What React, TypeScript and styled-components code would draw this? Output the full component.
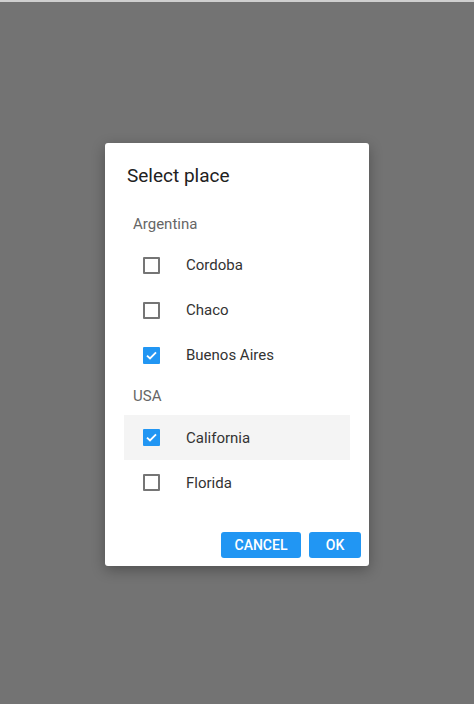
import React, {useState} from 'react';
import styled, {createGlobalStyle} from 'styled-components';

const GlobalStyle = createGlobalStyle`
  html, body {
    margin: 0;
    padding: 0;
  }
  body {
    font-family: Roboto, "Liberation Sans", sans-serif;
  }
`;

type Place = {
  name: string;
  checked: boolean;
};

type Group = {
  country: string;
  places: Place[];
};

const INITIAL: Group[] = [
  {
    country: 'Argentina',
    places: [
      {name: 'Cordoba', checked: false},
      {name: 'Chaco', checked: false},
      {name: 'Buenos Aires', checked: true},
    ],
  },
  {
    country: 'USA',
    places: [
      {name: 'California', checked: true},
      {name: 'Florida', checked: false},
    ],
  },
];

const Screen = styled.div`
  width: 474px;
  height: 704px;
  box-sizing: border-box;
  background: #737373;
  border-top: 2px solid #cfcfcf;
  display: flex;
  justify-content: center;
  padding-top: 141px;
`;

const Dialog = styled.div`
  width: 264px;
  height: 423px;
  box-sizing: border-box;
  background: #fff;
  border-radius: 3px;
  box-shadow: 0 4px 14px rgba(0, 0, 0, 0.3);
  display: flex;
  flex-direction: column;
`;

const Title = styled.h2`
  margin: 0;
  padding: 21px 0 0 22px;
  height: 62px;
  box-sizing: border-box;
  font-size: 19px;
  line-height: 24px;
  font-weight: 400;
  color: #212121;
`;

const List = styled.div`
  margin: 0 19px;
  flex: 1;
`;

const Header = styled.div`
  height: 37.5px;
  display: flex;
  align-items: center;
  padding-left: 9px;
  font-size: 15px;
  color: #666;
`;

const Row = styled.div<{$active?: boolean}>`
  height: 45px;
  display: flex;
  align-items: center;
  padding-left: 19px;
  background: ${(p) => (p.$active ? '#f4f4f4' : 'transparent')};
  cursor: pointer;
`;

const Box = styled.span<{$checked: boolean}>`
  width: 17px;
  height: 17px;
  box-sizing: border-box;
  border-radius: 1px;
  border: 2px solid ${(p) => (p.$checked ? '#2196f3' : '#757575')};
  background: ${(p) => (p.$checked ? '#2196f3' : 'transparent')};
  display: flex;
  align-items: center;
  justify-content: center;
  margin-right: 26px;
`;

const Label = styled.span`
  font-size: 15px;
  color: #333;
`;

const Actions = styled.div`
  display: flex;
  justify-content: flex-end;
  gap: 8px;
  padding: 0 8px 8px 0;
`;

const Button = styled.button<{$width: number}>`
  width: ${(p) => p.$width}px;
  height: 26px;
  border: none;
  border-radius: 3px;
  background: #2196f3;
  color: #fff;
  font-family: Roboto, "Liberation Sans", sans-serif;
  font-size: 14px;
  font-weight: 500;
  padding: 0;
  cursor: pointer;
`;

function Check() {
  return (
    <svg width="11" height="9" viewBox="0 0 11 9">
      <path d="M1 4.6 L4 7.4 L10 1.4" fill="none" stroke="#fff" strokeWidth="1.9" />
    </svg>
  );
}

function App() {
  const [groups, setGroups] = useState<Group[]>(INITIAL);

  const toggle = (g: number, i: number) => {
    setGroups(
      groups.map((group, gi) =>
        gi !== g
          ? group
          : {
              ...group,
              places: group.places.map((p, pi) => (pi === i ? {...p, checked: !p.checked} : p)),
            },
      ),
    );
  };

  return (
    <Screen>
      <GlobalStyle />
      <Dialog>
        <Title>Select place</Title>
        <List>
          {groups.map((group, gi) => (
            <div key={group.country}>
              <Header>{group.country}</Header>
              {group.places.map((place, pi) => (
                <Row
                  key={place.name}
                  $active={place.name === 'California'}
                  onClick={() => toggle(gi, pi)}
                >
                  <Box $checked={place.checked}>{place.checked ? <Check /> : null}</Box>
                  <Label>{place.name}</Label>
                </Row>
              ))}
            </div>
          ))}
        </List>
        <Actions>
          <Button $width={80}>CANCEL</Button>
          <Button $width={52}>OK</Button>
        </Actions>
      </Dialog>
    </Screen>
  );
}

export default App;
